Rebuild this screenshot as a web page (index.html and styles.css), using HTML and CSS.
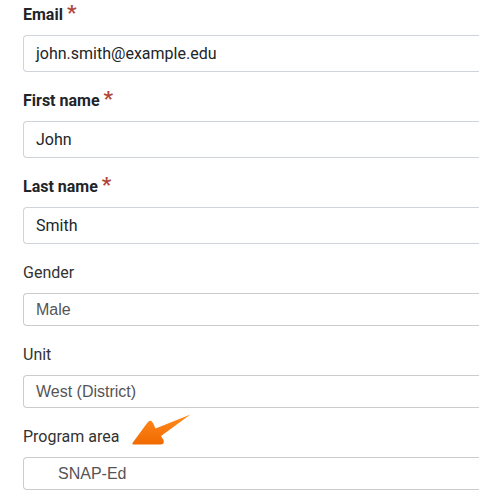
FILE: index.html
```html
<!DOCTYPE html>
<html>
<head>
<meta charset="utf-8">
<link rel="stylesheet" href="styles.css">
</head>
<body>
<form class="form">
  <div class="group">
    <label class="label required">Email <span class="star">*</span></label>
    <div class="control text">john.smith@example.edu</div>
  </div>
  <div class="group">
    <label class="label required">First name <span class="star">*</span></label>
    <div class="control text">John</div>
  </div>
  <div class="group">
    <label class="label required">Last name <span class="star">*</span></label>
    <div class="control text">Smith</div>
  </div>
  <div class="group">
    <label class="label">Gender</label>
    <div class="control select">Male</div>
  </div>
  <div class="group">
    <label class="label">Unit</label>
    <div class="control select">West (District)</div>
  </div>
  <div class="group">
    <label class="label">Program area</label>
    <div class="control select indented">SNAP-Ed</div>
  </div>
</form>
<svg class="arrow" width="70" height="40" viewBox="128 410 70 40" xmlns="http://www.w3.org/2000/svg">
  <defs>
    <linearGradient id="og" x1="0" y1="0" x2="0" y2="1">
      <stop offset="0" stop-color="#ff8c1f"/>
      <stop offset="1" stop-color="#f06a00"/>
    </linearGradient>
  </defs>
  <path d="M132.5,443 L147.5,422.5 Q150.5,419 153,423 L155.5,428.5 L190.5,414.5 L161,436 L163.5,440 Q165,444.5 160,444.5 L135,444.5 Q131.5,444.5 132.5,443 Z" fill="url(#og)"/>
</svg>
</body>
</html>
```
FILE: styles.css
```css
html, body {
  margin: 0;
  padding: 0;
  background: #ffffff;
}
body {
  width: 479px;
  height: 503px;
  overflow: hidden;
  position: relative;
  font-family: Roboto, "Liberation Sans", sans-serif;
}
.form {
  padding: 2px 0 0 23px;
}
.group {
  margin-bottom: 16px;
}
.label {
  display: block;
  font-size: 16px;
  line-height: 24px;
  color: #333333;
  padding-top: 1px;
  margin-bottom: 8px;
}
.label.required {
  font-weight: 700;
  color: #212529;
}
.star {
  color: #b0473b;
  font-size: 21px;
  line-height: 16px;
  font-weight: 700;
}
.control {
  width: 456px;
  box-sizing: border-box;
  display: flex;
  align-items: center;
  border-radius: 4px 0 0 4px;
  background: #ffffff;
  white-space: nowrap;
  overflow: hidden;
}
.control.text {
  height: 37px;
  border: 1px solid #ced4da;
  border-right: none;
  padding-left: 12px;
  font-size: 16px;
  color: #212529;
  font-family: Roboto, "Liberation Sans", sans-serif;
}
.control.select {
  height: 33px;
  border: 1px solid #cccccc;
  border-right: none;
  padding-left: 12px;
  font-size: 16px;
  color: #555555;
  font-family: "Liberation Sans", Arial, sans-serif;
}
.control.indented {
  padding-left: 34px;
}
.arrow {
  position: absolute;
  left: 128px;
  top: 410px;
}
```
